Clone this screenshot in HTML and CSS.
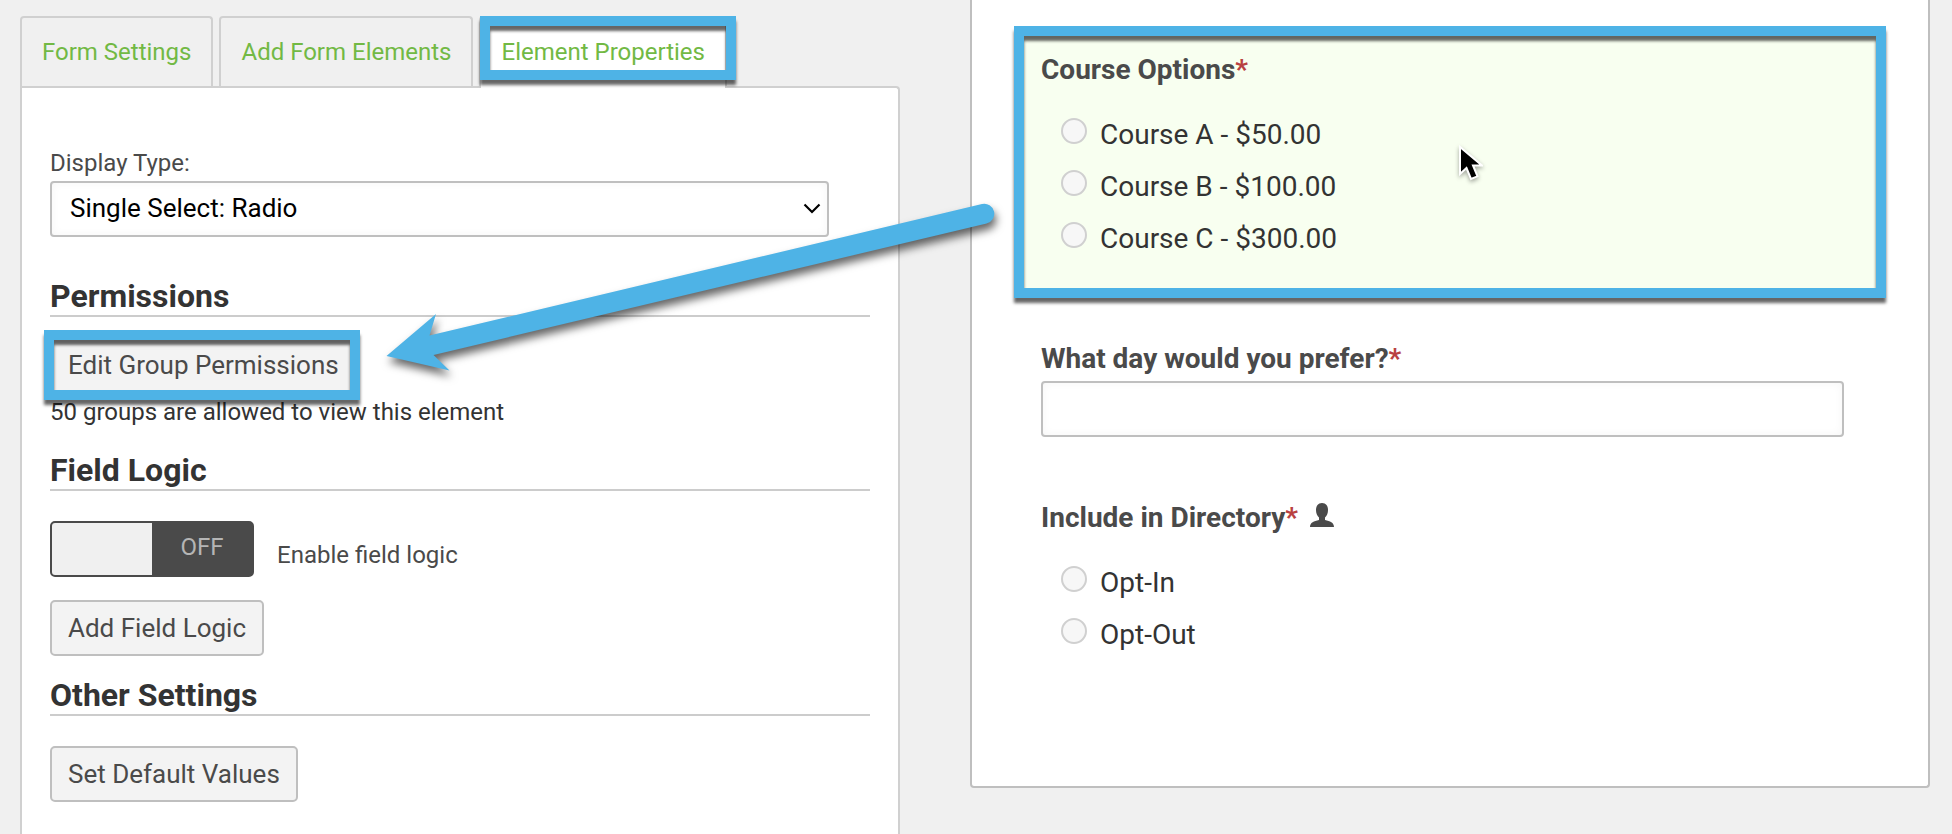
FILE: index.html
```html
<!DOCTYPE html>
<html lang="en">
<head>
    <meta charset="UTF-8">
    <title>Form Builder</title>
    <link rel="stylesheet" href="styles.css">
</head>
<body>
<div class="builder">
    <!-- left: settings -->
    <div class="sidebar">
        <nav class="tabs">
            <a href="#settings" class="tab">Form Settings</a>
            <a href="#elements" class="tab">Add Form Elements</a>
            <a href="#properties" class="tab active mark">Element Properties</a>
        </nav>
        <div class="panel">
            <label class="small-label" for="display-type">Display Type:</label>
            <div class="select-wrap">
                <select id="display-type">
                    <option>Single Select: Radio</option>
                    <option>Single Select: Dropdown</option>
                </select>
                <svg class="chevron" viewBox="0 0 18 12" width="18" height="12"><path d="M1.5 1.5 9 9l7.5-7.5" fill="none" stroke="#000" stroke-width="2.2"/></svg>
            </div>

            <h2>Permissions</h2>
            <button type="button" class="btn mark">Edit Group Permissions</button>
            <p class="note">50 groups are allowed to view this element</p>

            <h2>Field Logic</h2>
            <div class="toggle-row">
                <label class="toggle">
                    <input type="checkbox" id="logic">
                    <span class="knob"></span>
                    <span class="state">OFF</span>
                </label>
                <label class="toggle-label" for="logic">Enable field logic</label>
            </div>
            <button type="button" class="btn">Add Field Logic</button>

            <h2 class="close">Other Settings</h2>
            <button type="button" class="btn">Set Default Values</button>
        </div>
    </div>

    <!-- right: form preview -->
    <form class="preview">
        <fieldset class="field selected mark">
            <legend>Course Options<span class="req">*</span></legend>
            <label class="option"><input type="radio" name="course"> Course A - $50.00</label>
            <label class="option"><input type="radio" name="course"> Course B - $100.00</label>
            <label class="option"><input type="radio" name="course"> Course C - $300.00</label>
            <svg class="cursor" viewBox="0 0 26 40" width="26" height="40">
                <path d="M3 3v27l6.500-6 4.500 11 6.500-2.700-4.500-10.800h9z" fill="#000" stroke="#fff" stroke-width="2"/>
            </svg>
        </fieldset>
        <div class="field field-text">
            <label class="title" for="day">What day would you prefer?<span class="req">*</span></label>
            <input type="text" id="day" class="text">
        </div>
        <fieldset class="field">
            <legend>Include in Directory<span class="req">*</span>
                <svg class="person" viewBox="0 0 24 24" width="24" height="24"><path d="M12 0c4 0 6 3 6 7 0 3-1 5.500-3 7.500v2.500c5 1 9 2.500 9 7H0c0-4.500 4-6 9-7v-2.500C7 12.500 6 10 6 7c0-4 2-7 6-7z" fill="#4a4a4a"/></svg>
            </legend>
            <label class="option"><input type="radio" name="directory"> Opt-In</label>
            <label class="option"><input type="radio" name="directory"> Opt-Out</label>
        </fieldset>
    </form>

    <svg class="arrow" viewBox="380 200 630 190" width="630" height="190">
        <path d="M386.500 356 436 314l-6.500 21.500L982 204a10 10 0 0 1 4.600 19.500L433.500 355l16 15.500z" fill="#4eb3e6"/>
    </svg>
</div>
</body>
</html>
```

FILE: styles.css
```css
* {
    box-sizing: border-box;
    margin: 0;
    padding: 0;
}

body {
    background: #f0f0f0;
    color: #333;
    font-family: Roboto, "Liberation Sans", sans-serif;
    font-size: 24px;
    line-height: 28px;
}

.builder {
    position: relative;
    display: grid;
    grid-template-columns: 880fr 960fr;
    column-gap: 70px;
    align-items: start;
    min-height: 100vh;
    padding: 0 22px 0 20px;
}

/* tabs */
.sidebar {
    display: flex;
    flex-direction: column;
    align-self: stretch;
    padding-top: 16px;
}

.tabs {
    display: flex;
    gap: 6px;
}

.tab {
    padding: 18px 20px;
    border: 2px solid #d0d0d0;
    border-bottom: 0;
    border-radius: 4px 4px 0 0;
    color: #72b944;
    line-height: 32px;
    text-decoration: none;
}

.tab.active {
    z-index: 1;
    margin-bottom: -2px;
    background: #fff;
}

.panel {
    flex: 1;
    padding: 61px 28px 30px;
    border: 2px solid #d0d0d0;
    border-bottom: 0;
    border-radius: 0 4px 0 0;
    background: #fff;
}

.small-label {
    display: block;
    margin-bottom: 4px;
    color: #4a4a4a;
}

.select-wrap {
    position: relative;
    width: 95%;
}

select, .text {
    display: block;
    width: 100%;
    height: 56px;
    padding: 0 18px 2px;
    border: 2px solid #bfbfbf;
    border-radius: 4px;
    background: #fff;
    box-shadow: inset 0 0 10px rgba(0, 0, 0, .04);
    color: #000;
    font: 26px Roboto, "Liberation Sans", sans-serif;
    appearance: none;
}

.chevron {
    position: absolute;
    right: 8px;
    top: 22px;
}

h2 {
    margin: 40px 0 20px;
    border-bottom: 2px solid #ccc;
    font-size: 32px;
    line-height: 38px;
}

.note + h2 {
    margin: 25px 0 30px;
}

h2.close {
    margin: 20px 0 30px;
}

.btn {
    display: block;
    height: 56px;
    padding: 0 16px;
    border: 2px solid #bfbfbf;
    border-radius: 5px;
    background: #f3f3f3;
    color: #4a4a4a;
    font: 26px Roboto, "Liberation Sans", sans-serif;
}

.note {
    margin-top: 5px;
}

/* on/off switch */
.toggle-row {
    display: flex;
    align-items: flex-end;
    gap: 23px;
    margin-bottom: 23px;
}

.toggle {
    position: relative;
    display: flex;
    width: 204px;
    height: 56px;
    border: 2px solid #4a4a4a;
    border-radius: 5px;
    background: #4a4a4a;
    overflow: hidden;
}

.toggle input {
    position: absolute;
    opacity: 0;
}

.knob {
    flex: 1;
    background: #f0f0f0;
}

.state {
    flex: 1;
    color: #b5b5b5;
    line-height: 48px;
    text-align: center;
}

.toggle-label {
    padding-bottom: 8px;
    color: #4a4a4a;
}

/* preview */
.preview {
    padding: 26px 42px 92px;
    border: 2px solid #bfbfbf;
    border-top: 0;
    border-radius: 0 0 4px 4px;
    background: #fff;
    font-size: 28px;
}

.field {
    padding: 27px 42px 33px 27px;
    border: 0;
}

.field-text {
    margin: 17px 0 4px;
}

.selected {
    background: #f8fff0;
}

legend, .title {
    display: block;
    float: left;
    width: 100%;
    margin-bottom: 22px;
    color: #4a4a4a;
    font-weight: bold;
    line-height: 34px;
}

.title {
    float: none;
    margin-bottom: 5px;
}

.req {
    color: #b94141;
}

.person {
    margin-left: 5px;
}

.option {
    display: flex;
    align-items: center;
    gap: 13px;
    clear: both;
    padding-left: 20px;
    line-height: 52px;
}

.option input {
    width: 26px;
    height: 26px;
    margin-bottom: 8px;
    border: 2px solid #d0d0d0;
    border-radius: 50%;
    background: #f7f7f7;
    appearance: none;
}

/* callouts */
.mark {
    position: relative;
}

.mark::after {
    content: "";
    position: absolute;
    inset: 0;
    border: 10px solid #4eb3e6;
    box-shadow: 0 5px 3px rgba(0, 0, 0, .6), inset 0 5px 3px rgba(0, 0, 0, .6);
    pointer-events: none;
}

.tab.mark::after {
    inset: -2px -11px 8px -1px;
}

.btn.mark::after {
    inset: -9px -5px -9px -8px;
}

.arrow {
    position: absolute;
    left: 380px;
    top: 200px;
    filter: drop-shadow(2px 6px 4px rgba(0, 0, 0, .6));
    pointer-events: none;
}

.cursor {
    position: absolute;
    left: 443px;
    top: 118px;
    filter: drop-shadow(0 2px 2px rgba(0, 0, 0, .35));
}
```
